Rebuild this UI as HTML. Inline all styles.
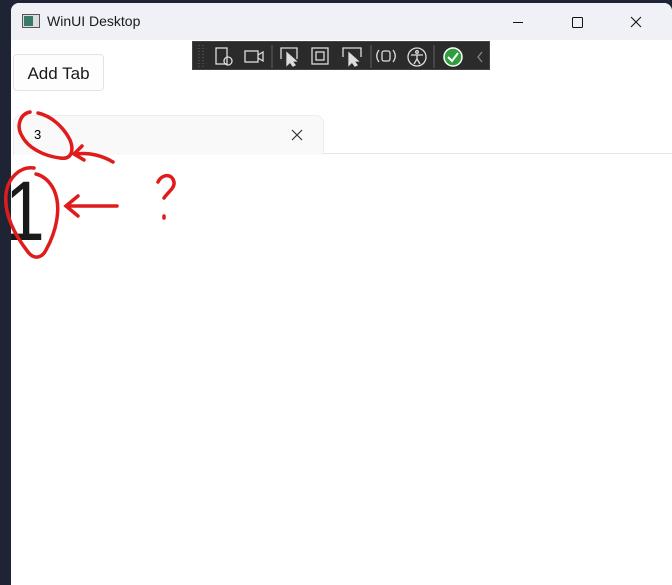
<!DOCTYPE html>
<html><head><style>
body{margin:0;width:672px;height:585px;background:#1e2433;position:relative;overflow:hidden;font-family:"Segoe UI","Liberation Sans",sans-serif}
.win{position:absolute;left:11px;top:3px;width:661px;height:582px;background:#fff;border-radius:8px 8px 0 0;overflow:hidden}
.tb{position:absolute;left:0;top:0;right:0;height:37px;background:#eff1f7}
.title{position:absolute;left:36px;top:10px;font-size:14px;color:#1a1a1a}
.btn{position:absolute;left:2px;top:51px;width:91px;height:37px;border:1px solid #e3e3e3;border-radius:4px;background:#fdfdfd;font-size:17px;color:#1a1a1a;line-height:37px;text-align:center;box-sizing:border-box}
.tab{position:absolute;left:2px;top:112px;width:311px;height:40px;background:#f9f9f9;border:1px solid #ececec;border-bottom:none;border-radius:8px 8px 0 0;box-sizing:border-box}
.line{position:absolute;left:312px;right:0;top:150px;height:1px;background:#e8e8e8}
.one{position:absolute;left:-6px;top:158px;font-size:84px;font-weight:300;color:#1a1a1a;line-height:100px;transform:scaleX(0.85);transform-origin:left}
.tool{position:absolute;left:192px;top:41px;width:298px;height:29px;background:#2b2b2b;border:1px solid #444;box-sizing:border-box}
</style></head><body>
<div class="win">
<div class="tb">
<svg style="position:absolute;left:11px;top:11px" width="18" height="15"><rect x="0.5" y="0.5" width="17" height="13" fill="#ddd" stroke="#555"/><rect x="2" y="2" width="9" height="10" fill="#3a7a6a"/></svg>
<div class="title">WinUI Desktop</div>
<svg style="position:absolute;left:495px;top:10px" width="150" height="18" fill="none" stroke="#111" stroke-width="1">
<line x1="7" y1="9.5" x2="17" y2="9.5"/><rect x="66.5" y="4.5" width="10" height="10" rx="1"/><path d="M125 4l10 10M135 4l-10 10"/></svg>
</div>
<div class="btn">Add Tab</div>
<div class="tab"><span style="position:absolute;left:20px;top:11px;font-size:13px">3</span>
<svg style="position:absolute;left:277px;top:13px" width="12" height="12" stroke="#333" stroke-width="1.2"><path d="M1 1l10 10M11 1L1 11"/></svg></div>
<div class="line"></div>
<div class="one">1</div>
</div>
<div class="tool">
<svg width="298" height="29" fill="none" stroke="#ddd" stroke-width="1.3">
<g stroke="#555" stroke-dasharray="1 2"><line x1="6" y1="3" x2="6" y2="26"/><line x1="10" y1="3" x2="10" y2="26"/></g>
<rect x="23" y="6" width="11" height="16"/><circle cx="35" cy="19" r="4"/>
<rect x="52" y="9" width="13" height="11"/><path d="M65 13l5-3v9l-5-3"/>
<line x1="79" y1="3" x2="79" y2="26" stroke="#555"/>
<path d="M88 17V6h16v11"/><path d="M94 11l0 12 3-3 3 4 2-1-3-4h4z" fill="#ddd"/>
<rect x="119" y="6" width="16" height="16"/><rect x="123" y="10" width="8" height="8"/>
<path d="M150 15V6h18v9"/><path d="M156 11l0 12 3-3 3 4 2-1-3-4h4z" fill="#ddd"/>
<line x1="178" y1="3" x2="178" y2="26" stroke="#555"/>
<path d="M186 8c-3 4-3 8 0 12M200 8c3 4 3 8 0 12"/><rect x="189" y="9" width="8" height="10" rx="2"/>
<circle cx="224" cy="15" r="9"/><circle cx="224" cy="10" r="1.3"/><path d="M218 13h12M224 13v4l-3 5M224 17l3 5"/>
<line x1="241" y1="3" x2="241" y2="26" stroke="#555"/>
<circle cx="260" cy="15" r="9" fill="#2e9e3e" stroke="#fff" stroke-width="1.5"/><path d="M255 15l4 4 6-8" stroke="#fff" stroke-width="2"/>
<path d="M289 10l-4 5 4 5" stroke="#888"/>
</svg></div>
<svg style="position:absolute;left:0;top:0" width="672" height="585" fill="none" stroke="#e01b1b" stroke-width="3.5" stroke-linecap="round">
<path d="M30 112c-10 2-14 14-8 24 6 12 22 20 38 22 12 2 14-8 10-18-6-12-18-24-32-27"/>
<path d="M113 162c-10-6-24-10-36-8M82 146l-8 8 10 6"/>
<path d="M34 168c-14-2-26 10-28 26-2 20 8 40 22 58 6 8 14 6 18-2 10-18 16-42 8-60-4-8-10-14-18-16"/>
<path d="M117 206H66M78 196l-12 10 12 10"/>
<path d="M158 182c4-8 14-9 16 0 1 6-6 10-10 16M164 216v2"/>
</svg>
</body></html>
